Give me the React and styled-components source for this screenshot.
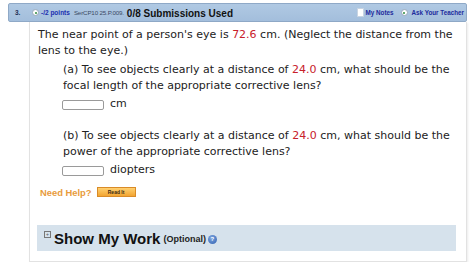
import React from 'react'
import styled, {createGlobalStyle} from 'styled-components'

const Global = createGlobalStyle`
  body {
    margin: 0;
    background: #fff;
    font-family: "DejaVu Sans", Verdana, sans-serif;
  }
`

function Question() {
  return (
    <Page>
      <Global />
      <Header>
        <Num>3.</Num>
        <Dot />
        <Points>-/2 points</Points>
        <Code>SerCP10 25.P.009.</Code>
        <Subs>0/8 Submissions Used</Subs>
        <Right>
          <NoteBox />
          <HeadLink>My Notes</HeadLink>
          <Dot />
          <HeadLink>Ask Your Teacher</HeadLink>
        </Right>
      </Header>
      <Card>
        <Text>
          The near point of a person's eye is <Red>72.6</Red> cm. (Neglect the distance from the lens to the eye.)
        </Text>
        <Part>
          <Text>
            (a) To see objects clearly at a distance of <Red>24.0</Red> cm, what should be the focal length of the appropriate corrective lens?
          </Text>
          <Answer>
            <Input />
            <Unit>cm</Unit>
          </Answer>
        </Part>
        <Part spaced>
          <Text>
            (b) To see objects clearly at a distance of <Red>24.0</Red> cm, what should be the power of the appropriate corrective lens?
          </Text>
          <Answer>
            <Input />
            <Unit>diopters</Unit>
          </Answer>
        </Part>
        <Help>
          <HelpLabel>Need Help?</HelpLabel>
          <ReadIt>Read It</ReadIt>
        </Help>
        <WorkBar>
          <Toggle>+</Toggle>
          <WorkTitle>Show My Work</WorkTitle>
          <Optional>(Optional)</Optional>
          <Info>?</Info>
        </WorkBar>
      </Card>
    </Page>
  )
}

const Page = styled.div`
  width: 459px;
  padding: 3px 0 0 8px;
`
const Header = styled.div`
  height: 19px;
  display: flex;
  align-items: center;
  background: linear-gradient(#b0c9e3, #a3bedc);
  border: 1px solid #8fa9c7;
  border-radius: 2px;
  box-sizing: border-box;
  padding: 0 0 0 6px;
  font-family: "Liberation Sans", Arial, sans-serif;
`
const Num = styled.span`
  font-size: 6.5px;
  font-weight: bold;
  color: #1f2f55;
  width: 17px;
`
const Dot = styled.span`
  width: 7px;
  height: 7px;
  border-radius: 50%;
  background: #fff;
  border: 1px solid #9ab;
  position: relative;
  box-sizing: border-box;
  margin-right: 2px;
  flex-shrink: 0;
  &::after {
    content: '';
    position: absolute;
    left: 1.5px;
    top: 1.5px;
    width: 2px;
    height: 2px;
    border-radius: 50%;
    background: #2e8b3e;
  }
`
const Points = styled.span`
  font-size: 6.5px;
  font-weight: bold;
  color: #1c2fb0;
  margin-right: 4px;
`
const Code = styled.span`
  font-size: 6.2px;
  color: #3b4a63;
  letter-spacing: -0.15px;
  white-space: nowrap;
`
const Subs = styled.span`
  font-size: 10px;
  font-weight: bold;
  color: #111;
  margin-left: 3px;
  margin-top: 2px;
  white-space: nowrap;
`
const Right = styled.div`
  margin-left: auto;
  display: flex;
  align-items: center;
  gap: 2px;
  padding-right: 2px;
`
const NoteBox = styled.span`
  width: 7px;
  height: 9px;
  background: #fff;
  border: 1px solid #c8d4e2;
  box-sizing: border-box;
`
const HeadLink = styled.span`
  font-size: 6.3px;
  font-weight: bold;
  color: #1c2a9c;
  margin-right: 5px;
  white-space: nowrap;
  &:last-child { margin-right: 0; }
`
const Card = styled.div`
  margin-left: 21px;
  border: 1px solid #e2e2e2;
  border-top: none;
  box-shadow: 1px 1px 2px rgba(0,0,0,0.08);
  padding: 5px 10px 10px 7px;
`
const Text = styled.div`
  font-size: 11px;
  line-height: 16px;
  color: #222;
  padding-left: 1px;
`
const Red = styled.span`
  color: #c8202a;
`
const Part = styled.div`
  padding-left: 25px;
  margin-top: ${p => (p.spaced ? '18px' : '3px')};
`
const Answer = styled.div`
  display: flex;
  align-items: center;
  gap: 6px;
  height: 11px;
  margin-top: 5px;
`
const Input = styled.span`
  width: 42px;
  height: 10px;
  box-sizing: border-box;
  border: 1px solid #9a9a9a;
  border-radius: 2px;
  background: #fff;
`
const Unit = styled.span`
  font-size: 11px;
  line-height: 11px;
  color: #222;
  margin-top: -3px;
`
const Help = styled.div`
  display: flex;
  align-items: center;
  gap: 5px;
  margin: 11px 0 0 3px;
  height: 10px;
  font-family: "Liberation Sans", Arial, sans-serif;
`
const HelpLabel = styled.span`
  font-size: 9.4px;
  font-weight: bold;
  color: #e89b3c;
`
const ReadIt = styled.span`
  width: 39px;
  height: 10px;
  box-sizing: border-box;
  display: flex;
  align-items: center;
  justify-content: center;
  background: linear-gradient(#ffd070, #f2a431);
  border: 1px solid #d98b28;
  font-size: 5px;
  font-weight: bold;
  color: #3a2a10;
`
const WorkBar = styled.div`
  margin-top: 28px;
  height: 26px;
  display: flex;
  align-items: center;
  background: #d6e2ec;
  padding-left: 7px;
  font-family: "Liberation Sans", Arial, sans-serif;
`
const Toggle = styled.span`
  width: 5px;
  height: 5px;
  border: 1px solid #777;
  font-size: 5px;
  line-height: 5px;
  text-align: center;
  color: #555;
  align-self: flex-start;
  margin-top: 6px;
  margin-right: 3px;
`
const WorkTitle = styled.span`
  font-size: 15px;
  font-weight: bold;
  color: #111;
  margin-right: 3px;
`
const Optional = styled.span`
  font-size: 9px;
  font-weight: bold;
  color: #222;
  margin-top: 2px;
  margin-right: 2px;
`
const Info = styled.span`
  width: 9px;
  height: 9px;
  border-radius: 50%;
  background: radial-gradient(circle at 40% 35%, #7fa7e0, #2f5fb0);
  color: #fff;
  font-size: 6px;
  font-weight: bold;
  line-height: 9px;
  text-align: center;
  margin-top: 2px;
`

export default Question
